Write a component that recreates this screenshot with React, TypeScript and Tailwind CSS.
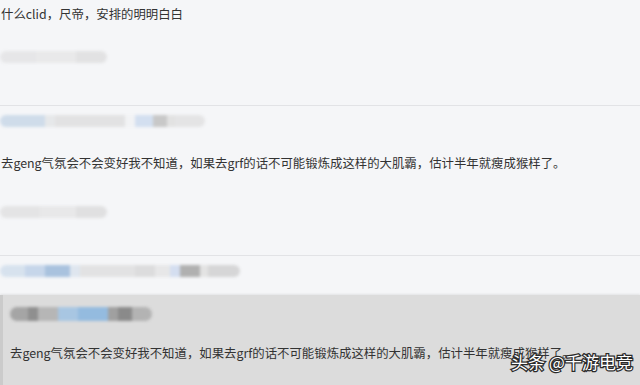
import React from "react";

type Seg = [number, string];

function Blur({ segs, h = 12, className = "" }: { segs: Seg[]; h?: number; className?: string }) {
  return (
    <div className={`flex blur-[1.5px] ${className}`} style={{ height: h }}>
      {segs.map(([w, c], i) => (
        <div key={i} style={{ width: w, background: c }} className="h-full first:rounded-l-full last:rounded-r-full" />
      ))}
    </div>
  );
}

export default function App() {
  const longText =
    "去geng气氛会不会变好我不知道，如果去grf的话不可能锻炼成这样的大肌霸，估计半年就瘦成猴样了。";
  return (
    <div
      className="relative w-[640px] h-[385px] overflow-hidden bg-[#f5f6f8] text-[#333] text-[12.4px] leading-[20px]"
      style={{ fontFamily: '"Noto Sans CJK SC", "Noto Sans", sans-serif' }}
    >
      {/* section 1 */}
      <div className="border-b border-[#e2e3e6] pt-[4px] pb-[42px]">
        <div className="pl-[1px]">什么clid，尺帝，安排的明明白白</div>
        <Blur className="mt-[27px]" segs={[[36, "#e6e6e8"], [40, "#e9e9ea"], [31, "#e2e2e3"]]} />
      </div>

      {/* section 2 */}
      <div className="border-b border-[#e2e3e6] pt-[9px] pb-[37px]">
        <Blur
          segs={[
            [45, "#cfdcea"],
            [10, "#e6e8ea"],
            [70, "#e2e2e3"],
            [10, "#f2f3f5"],
            [18, "#d3dff0"],
            [14, "#c8c8c8"],
            [8, "#e2e2e2"],
            [30, "#e4e4e5"],
          ]}
        />
        <div className="mt-[26px] pl-[1px]">{longText}</div>
        <Blur className="mt-[33px]" segs={[[40, "#e4e4e5"], [36, "#e8e8e9"], [31, "#e0e0e1"]]} />
      </div>

      {/* section 3 */}
      <div className="pt-[9px]">
        <Blur
          segs={[
            [25, "#d7e2ee"],
            [20, "#c6d6ea"],
            [25, "#a9c2de"],
            [10, "#dfe6ef"],
            [55, "#e2e2e3"],
            [20, "#dcdcdd"],
            [15, "#e7e7e8"],
            [10, "#d4def0"],
            [20, "#b0b0b0"],
            [8, "#e3e3e3"],
            [32, "#d6d6d7"],
          ]}
        />
        <div className="mt-[18px] h-[100px] bg-[#dcdcdc] border-l-[3px] border-[#cbcbcb] shadow-[0_-1px_2px_rgba(0,0,0,0.08)] pl-[7px] pt-[12px]">
          <Blur
            h={14}
            segs={[
              [18, "#a5a5a5"],
              [10, "#8f8f8f"],
              [20, "#b6b6b6"],
              [20, "#a8c6e2"],
              [30, "#94bbdf"],
              [10, "#a0a0a0"],
              [14, "#8a8a8a"],
              [20, "#b3b3b3"],
            ]}
          />
          <div className="mt-[22px]">{longText}</div>
        </div>
      </div>

      {/* watermark */}
      <div
        className="absolute left-[511px] top-[350px] whitespace-nowrap text-[17px] leading-[24px] text-white [-webkit-text-stroke:2.5px_#2a2a2a] [paint-order:stroke_fill]"
        style={{ fontFamily: '"Noto Sans CJK SC", sans-serif' }}
      >
        头条 @千游电竞
      </div>
    </div>
  );
}
